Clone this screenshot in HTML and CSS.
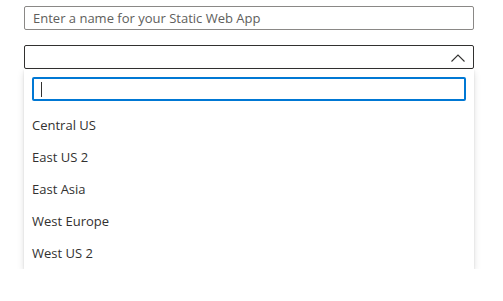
FILE: index.html
```html
<!DOCTYPE html>
<html lang="en">
<head>
    <meta charset="UTF-8">
    <title>Static Web App</title>
    <link rel="stylesheet" href="styles.css">
</head>
<body>

<div class="form">
    <!-- Name field -->
    <div class="text-field">
        <span class="placeholder">Enter a name for your Static Web App</span>
    </div>

    <!-- Region dropdown (open) -->
    <div class="dropdown">
        <div class="dropdown-title">
            <svg class="chevron" width="14" height="8" viewBox="0 0 14 8">
                <path d="M0.5 7.5 L7 1 L13.5 7.5" fill="none" stroke="#323130" stroke-width="1.1"/>
            </svg>
        </div>
        <div class="dropdown-panel">
            <div class="search-box"><span class="caret"></span></div>
            <div class="option">Central US</div>
            <div class="option">East US 2</div>
            <div class="option">East Asia</div>
            <div class="option">West Europe</div>
            <div class="option">West US 2</div>
        </div>
    </div>
</div>

</body>
</html>
```

FILE: styles.css
```css
* {
    box-sizing: border-box;
}
body {
    margin: 0;
    background: #fff;
    font-family: "Open Sans", "Noto Sans", sans-serif;
    font-size: 13px;
    color: #323130;
}
.form {
    width: 450px;
    margin-left: 24px;
    padding-top: 6px;
}
.text-field {
    height: 24px;
    border: 1px solid #8a8886;
    border-radius: 2px;
    padding: 0 8px;
    display: flex;
    align-items: center;
}
.placeholder {
    color: #605e5c;
}
.dropdown {
    margin-top: 15px;
}
.dropdown-title {
    height: 24px;
    border: 1px solid #323130;
    border-radius: 2px;
    display: flex;
    align-items: center;
    justify-content: flex-end;
    padding-right: 8px;
}
.chevron {
    display: block;
    margin-top: 1px;
}
.dropdown-panel {
    height: 200px;
    padding-top: 8px;
    background: #fff;
    box-shadow: 0 3px 7px rgba(0, 0, 0, 0.13), 0 0.6px 2px rgba(0, 0, 0, 0.1);
}
.search-box {
    height: 24px;
    margin: 0 8px 8px 8px;
    border: 2px solid #0078d4;
    border-radius: 2px;
    display: flex;
    align-items: center;
    padding-left: 7px;
}
.caret {
    width: 1px;
    height: 15px;
    background: #323130;
}
.option {
    height: 32px;
    padding-left: 8px;
    display: flex;
    align-items: center;
}
```
